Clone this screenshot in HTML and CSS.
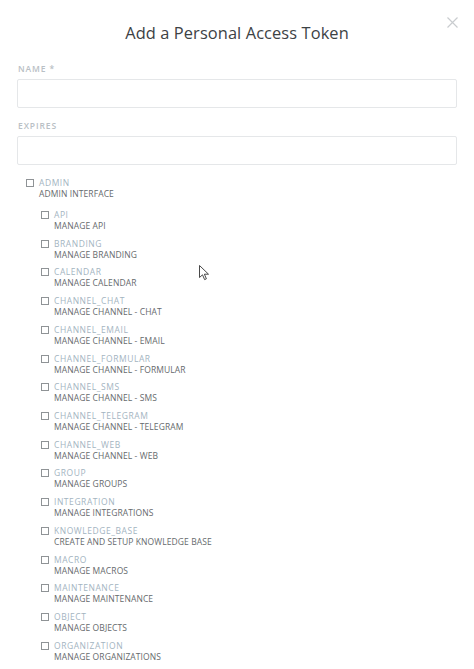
FILE: index.html
```html
<!DOCTYPE html>
<html>
<head>
<meta charset="utf-8">
<link rel="stylesheet" href="styles.css">
</head>
<body>
<div class="modal">
  <div class="header">
    <h1 class="title">Add a Personal Access Token</h1>
    <span class="close"><svg width="11" height="11" viewBox="0 0 11 11"><path d="M0.5 0.5L10.5 10.5M10.5 0.5L0.5 10.5" stroke="#c9cccf" stroke-width="1.2" fill="none"/></svg></span>
  </div>
  <div class="field">
    <label class="flabel">NAME *</label>
    <div class="input"></div>
  </div>
  <div class="field">
    <label class="flabel">EXPIRES</label>
    <div class="input"></div>
  </div>
  <ul class="tree">
    <li class="item">
      <div class="row"><span class="box"></span><div class="texts"><div class="lab">ADMIN</div><div class="desc">ADMIN INTERFACE</div></div></div>
      <ul class="tree sub">
        <li class="item"><div class="row"><span class="box"></span><div class="texts"><div class="lab">API</div><div class="desc">MANAGE API</div></div></div></li>
        <li class="item"><div class="row"><span class="box"></span><div class="texts"><div class="lab">BRANDING</div><div class="desc">MANAGE BRANDING</div></div></div></li>
        <li class="item"><div class="row"><span class="box"></span><div class="texts"><div class="lab">CALENDAR</div><div class="desc">MANAGE CALENDAR</div></div></div></li>
        <li class="item"><div class="row"><span class="box"></span><div class="texts"><div class="lab">CHANNEL_CHAT</div><div class="desc">MANAGE CHANNEL - CHAT</div></div></div></li>
        <li class="item"><div class="row"><span class="box"></span><div class="texts"><div class="lab">CHANNEL_EMAIL</div><div class="desc">MANAGE CHANNEL - EMAIL</div></div></div></li>
        <li class="item"><div class="row"><span class="box"></span><div class="texts"><div class="lab">CHANNEL_FORMULAR</div><div class="desc">MANAGE CHANNEL - FORMULAR</div></div></div></li>
        <li class="item"><div class="row"><span class="box"></span><div class="texts"><div class="lab">CHANNEL_SMS</div><div class="desc">MANAGE CHANNEL - SMS</div></div></div></li>
        <li class="item"><div class="row"><span class="box"></span><div class="texts"><div class="lab">CHANNEL_TELEGRAM</div><div class="desc">MANAGE CHANNEL - TELEGRAM</div></div></div></li>
        <li class="item"><div class="row"><span class="box"></span><div class="texts"><div class="lab">CHANNEL_WEB</div><div class="desc">MANAGE CHANNEL - WEB</div></div></div></li>
        <li class="item"><div class="row"><span class="box"></span><div class="texts"><div class="lab">GROUP</div><div class="desc">MANAGE GROUPS</div></div></div></li>
        <li class="item"><div class="row"><span class="box"></span><div class="texts"><div class="lab">INTEGRATION</div><div class="desc">MANAGE INTEGRATIONS</div></div></div></li>
        <li class="item"><div class="row"><span class="box"></span><div class="texts"><div class="lab">KNOWLEDGE_BASE</div><div class="desc">CREATE AND SETUP KNOWLEDGE BASE</div></div></div></li>
        <li class="item"><div class="row"><span class="box"></span><div class="texts"><div class="lab">MACRO</div><div class="desc">MANAGE MACROS</div></div></div></li>
        <li class="item"><div class="row"><span class="box"></span><div class="texts"><div class="lab">MAINTENANCE</div><div class="desc">MANAGE MAINTENANCE</div></div></div></li>
        <li class="item"><div class="row"><span class="box"></span><div class="texts"><div class="lab">OBJECT</div><div class="desc">MANAGE OBJECTS</div></div></div></li>
        <li class="item"><div class="row"><span class="box"></span><div class="texts"><div class="lab">ORGANIZATION</div><div class="desc">MANAGE ORGANIZATIONS</div></div></div></li>
      </ul>
    </li>
  </ul>
  <svg class="cursor" width="11" height="16" viewBox="0 0 11 16"><path d="M0.5 0.5L0.5 12.5L3.5 9.8L5.6 14.6L7.4 13.8L5.4 9.2L9.5 9.2Z" fill="#fff" stroke="#333" stroke-width="0.9" stroke-linejoin="round"/></svg>
</div>
</body>
</html>
```
FILE: styles.css
```css
html, body {
  margin: 0;
  padding: 0;
  background: #fff;
}
body {
  font-family: "Open Sans", "Noto Sans", sans-serif;
  color: #444;
  width: 474px;
  height: 669px;
  overflow: hidden;
}
.modal {
  position: relative;
  padding: 0 17px 0 17px;
}
.header {
  position: relative;
  height: 63px;
  display: flex;
  justify-content: center;
  align-items: flex-start;
}
.title {
  margin: 21px 0 0 0;
  font-family: "Open Sans", sans-serif;
  font-size: 16.4px;
  font-weight: 400;
  line-height: 24px;
  color: #3d4245;
  letter-spacing: 0.1px;
}
.close {
  position: absolute;
  right: -1px;
  top: 17px;
  display: block;
  width: 11px;
  height: 11px;
}
.close svg { display: block; }
.field {
  margin-bottom: 12px;
}
.flabel {
  display: block;
  font-size: 8.5px;
  font-weight: 600;
  letter-spacing: 0.9px;
  color: #b9c0c5;
  line-height: 11px;
  margin: 0 0 5px 1px;
}
.input {
  height: 27px;
  border: 1px solid #e5e7e9;
  border-radius: 2px;
  background: #fff;
}
.tree {
  list-style: none;
  margin: 0;
  padding: 0 0 0 9px;
}
.sub {
  padding-left: 15px;
  margin-top: 10px;
}
.item { margin: 0; }
.sub .item { margin-bottom: 6.73px; }
.row {
  display: flex;
  align-items: flex-start;
}
.box {
  flex: none;
  width: 6px;
  height: 6px;
  border: 1px solid #8f9396;
  margin: 2px 5px 0 0;
}
.texts { display: flex; flex-direction: column; }
.lab {
  font-size: 8.5px;
  line-height: 11px;
  letter-spacing: 0.55px;
  color: #a3b4bf;
}
.desc {
  font-size: 8.5px;
  font-weight: 500;
  line-height: 11px;
  letter-spacing: 0.1px;
  color: #666a6d;
}
.cursor {
  position: absolute;
  left: 199px;
  top: 265px;
}
```
